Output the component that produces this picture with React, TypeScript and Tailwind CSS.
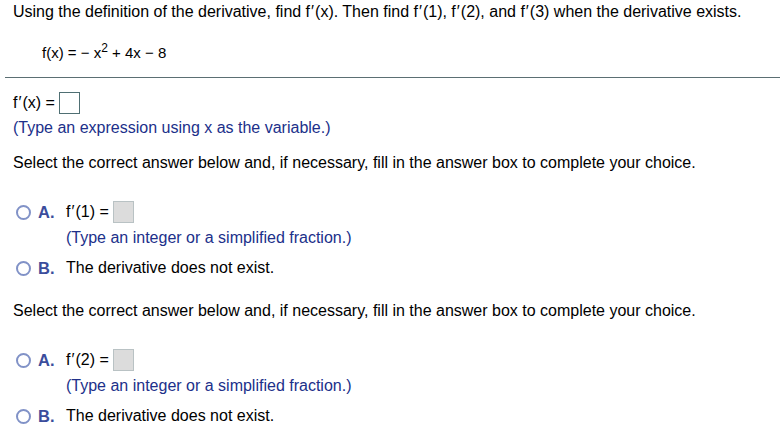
import { ReactNode } from 'react'

function P() {
  return <span className="ml-[1px] mr-[1px]">′</span>
}

function Radio() {
  return (
    <span className="inline-block w-[15px] h-[15px] rounded-full border-2 border-[#8192c7] bg-white shrink-0" />
  )
}

function Box({ filled = false }: { filled?: boolean }) {
  return (
    <span
      className={
        filled
          ? 'inline-block w-[21px] h-[22px] border border-[#b9c2c4] bg-[#dcdcdc]'
          : 'inline-block w-[21px] h-[22px] border border-[#4f6f73] bg-white'
      }
    />
  )
}

function Choice({ letter, children, className = '' }: { letter: string; children: ReactNode; className?: string }) {
  return (
    <div className={`flex items-center h-[22px] pl-[16px] ${className}`}>
      <Radio />
      <span className="ml-[7px] w-[28px] font-bold text-[#3b4d9c] text-[16.5px]">{letter}</span>
      {children}
    </div>
  )
}

function Part({ n, top }: { n: number; top: string }) {
  return (
    <>
      <div className={`px-[13px] leading-[18px] ${top}`}>
        Select the correct answer below and, if necessary, fill in the answer box to complete your choice.
      </div>
      <Choice letter="A." className="mt-[29px]">
        <span>
          f<P />({n})&nbsp;=&nbsp;
        </span>
        <Box filled />
      </Choice>
      <div className="pl-[66px] mt-[6px] leading-[18px] text-[#20308a]">(Type an integer or a simplified fraction.)</div>
      <Choice letter="B." className="mt-[10px]">
        <span>The derivative does not exist.</span>
      </Choice>
    </>
  )
}

export default function App() {
  return (
    <div
      className="w-[780px] h-[435px] bg-white text-black text-[16px] overflow-hidden"
      style={{ fontFamily: '"Liberation Sans", Arial, sans-serif' }}
    >
      <div className="pt-[3px] px-[13px] leading-[18px]">
        Using the definition of the derivative, find f<P />(x). Then find f<P />(1), f<P />(2), and f<P />(3) when the
        derivative exists.
      </div>
      <div className="mt-[23px] pl-[42px] text-[15px] leading-[18px]">
        f(x) = − x<sup className="text-[12px] relative -top-[6px]">2</sup> + 4x − 8
      </div>
      <div className="mt-[15px] ml-[5px] h-px bg-[#5b6f73]" />
      <div className="mt-[14px] px-[13px] flex items-center h-[22px]">
        <span>
          f<P />(x)&nbsp;=&nbsp;
        </span>
        <Box />
      </div>
      <div className="mt-[5px] px-[13px] leading-[18px] text-[#20308a]">(Type an expression using x as the variable.)</div>
      <Part n={1} top="mt-[17px]" />
      <Part n={2} top="mt-[23px]" />
    </div>
  )
}
